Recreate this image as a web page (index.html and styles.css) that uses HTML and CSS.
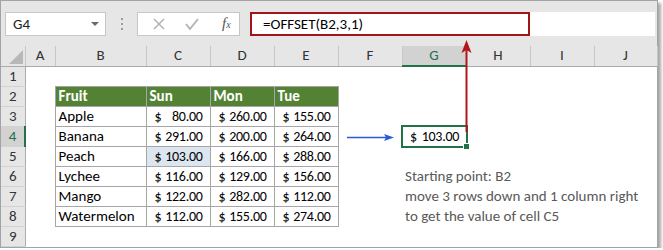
FILE: index.html
```html
<!DOCTYPE html>
<html lang="en">
<head>
    <meta charset="UTF-8">
    <title>OFFSET example</title>
    <link rel="stylesheet" href="styles.css">
</head>
<body>

    <div class="window">
        <!-- formula bar -->
        <div class="fbar">
            <div class="namebox">
                <span>G4</span>
                <span class="caret"></span>
            </div>
            <div class="grip"><i></i><i></i><i></i></div>
            <div class="fbtns">
                <svg width="103" height="22" viewBox="0 0 103 22">
                    <path d="M16 6 L26 16 M26 6 L16 16" stroke="#b5b5b5" stroke-width="1.6" fill="none"/>
                    <path d="M48 11 L52 16 L60 6" stroke="#b5b5b5" stroke-width="2" fill="none"/>
                </svg>
                <span class="fx">f<sub>x</sub></span>
            </div>
            <div class="finput">
                <div class="fhighlight">=OFFSET(B2,3,1)</div>
            </div>
        </div>

        <!-- sheet -->
        <table class="sheet">
            <colgroup>
                <col style="width:24px"><col style="width:30px"><col style="width:91px">
                <col style="width:64px"><col style="width:64px"><col style="width:64px">
                <col style="width:64px"><col style="width:64px"><col style="width:64px">
                <col style="width:64px"><col style="width:63px">
            </colgroup>
            <tr class="colhead">
                <th class="corner"><span class="tri"></span></th>
                <th>A</th><th>B</th><th>C</th><th>D</th><th>E</th><th>F</th>
                <th class="active">G</th><th>H</th><th>I</th><th>J</th>
            </tr>
            <tr><th class="rh">1</th><td></td><td></td><td></td><td></td><td></td><td></td><td></td><td></td><td></td><td></td></tr>
            <tr>
                <th class="rh">2</th><td></td>
                <td class="t hd">Fruit</td><td class="t hd">Sun</td><td class="t hd">Mon</td><td class="t hd">Tue</td>
                <td></td><td></td><td></td><td></td><td></td>
            </tr>
            <tr>
                <th class="rh">3</th><td></td>
                <td class="t">Apple</td>
                <td class="t"><div class="acc"><span>$</span><span>80.00</span></div></td>
                <td class="t"><div class="acc"><span>$</span><span>260.00</span></div></td>
                <td class="t"><div class="acc"><span>$</span><span>155.00</span></div></td>
                <td></td><td></td><td></td><td></td><td></td>
            </tr>
            <tr>
                <th class="rh active">4</th><td></td>
                <td class="t">Banana</td>
                <td class="t"><div class="acc"><span>$</span><span>291.00</span></div></td>
                <td class="t"><div class="acc"><span>$</span><span>200.00</span></div></td>
                <td class="t"><div class="acc"><span>$</span><span>264.00</span></div></td>
                <td></td>
                <td class="sel"><div class="acc"><span>$</span><span>103.00</span></div></td>
                <td></td><td></td><td></td>
            </tr>
            <tr>
                <th class="rh">5</th><td></td>
                <td class="t">Peach</td>
                <td class="t ref"><div class="acc"><span>$</span><span>103.00</span></div></td>
                <td class="t"><div class="acc"><span>$</span><span>166.00</span></div></td>
                <td class="t"><div class="acc"><span>$</span><span>288.00</span></div></td>
                <td></td><td></td><td></td><td></td><td></td>
            </tr>
            <tr>
                <th class="rh">6</th><td></td>
                <td class="t">Lychee</td>
                <td class="t"><div class="acc"><span>$</span><span>116.00</span></div></td>
                <td class="t"><div class="acc"><span>$</span><span>129.00</span></div></td>
                <td class="t"><div class="acc"><span>$</span><span>156.00</span></div></td>
                <td></td>
                <td class="note">Starting point: B2</td>
                <td></td><td></td><td></td>
            </tr>
            <tr>
                <th class="rh">7</th><td></td>
                <td class="t">Mango</td>
                <td class="t"><div class="acc"><span>$</span><span>122.00</span></div></td>
                <td class="t"><div class="acc"><span>$</span><span>282.00</span></div></td>
                <td class="t"><div class="acc"><span>$</span><span>112.00</span></div></td>
                <td></td>
                <td class="note">move 3 rows down and 1 column right</td>
                <td></td><td></td><td></td>
            </tr>
            <tr>
                <th class="rh">8</th><td></td>
                <td class="t">Watermelon</td>
                <td class="t"><div class="acc"><span>$</span><span>112.00</span></div></td>
                <td class="t"><div class="acc"><span>$</span><span>155.00</span></div></td>
                <td class="t"><div class="acc"><span>$</span><span>274.00</span></div></td>
                <td></td>
                <td class="note">to get the value of cell C5</td>
                <td></td><td></td><td></td>
            </tr>
            <tr><th class="rh">9</th><td></td><td></td><td></td><td></td><td></td><td></td><td></td><td></td><td></td><td></td></tr>
        </table>

        <!-- arrows drawn over the sheet -->
        <svg class="arrows" width="663" height="250" viewBox="0 0 663 250">
            <line x1="466.5" y1="50" x2="466.5" y2="132" stroke="#b0171c" stroke-width="2"/>
            <polygon points="466.5,40 461.5,53 466.5,50 471.5,53" fill="#b0171c"/>
            <line x1="347" y1="137.5" x2="388" y2="137.5" stroke="#2a5bd7" stroke-width="1.5"/>
            <polygon points="394,137.5 384,134 386,137.5 384,141" fill="#2a5bd7"/>
        </svg>
    </div>

</body>
</html>
```

FILE: styles.css
```css
body {
    margin: 0;
    background: #fff;
    font-family: "Carlito", "Lato", "Liberation Sans", sans-serif;
    font-size: 15px;
    color: #000;
}
.window {
    position: relative;
    width: 656px;
    border: 1px solid #a3a3a3;
    background: #fff;
    box-shadow: 3px 3px 3px rgba(0, 0, 0, 0.35);
}
.fbar {
    display: flex;
    align-items: stretch;
    height: 24px;
    padding: 11px 0 10px 4px;
    background: #e6e6e6;
}
.namebox {
    width: 101px;
    box-sizing: border-box;
    border: 1px solid #c6c6c6;
    background: #fff;
    display: flex;
    align-items: center;
    justify-content: space-between;
    padding: 0 6px 0 7px;
    color: #222;
}
.caret {
    width: 0;
    height: 0;
    border-left: 4px solid transparent;
    border-right: 4px solid transparent;
    border-top: 4px solid #6a6a6a;
}
.grip {
    width: 31px;
    display: flex;
    flex-direction: column;
    align-items: center;
    justify-content: center;
    gap: 3px;
}
.grip i {
    width: 2px;
    height: 2px;
    background: #9c9c9c;
}
.fbtns {
    width: 103px;
    box-sizing: border-box;
    border: 1px solid #c6c6c6;
    background: #fff;
    position: relative;
    display: flex;
    align-items: center;
}
.fbtns svg {
    position: absolute;
    left: 0;
    top: 0;
}
.fx {
    position: absolute;
    left: 84px;
    top: 2px;
    font-family: "Liberation Serif", serif;
    font-style: italic;
    font-size: 15px;
    color: #555;
}
.fx sub {
    font-size: 10px;
    vertical-align: 0;
}
.finput {
    margin-left: 10px;
    width: 405px;
    background: #fff;
}
.fhighlight {
    width: 280px;
    height: 24px;
    box-sizing: border-box;
    border: 2px solid #a0141a;
    padding-left: 11px;
    line-height: 20px;
}
.sheet {
    border-collapse: collapse;
    table-layout: fixed;
    width: 656px;
}
.sheet tr {
    height: 20px;
}
.sheet td, .sheet th {
    padding: 0 3px;
    height: 19px;
    line-height: 19px;
    white-space: nowrap;
}
.colhead th {
    background: #e6e6e6;
    font-weight: normal;
    color: #333;
    border-right: 1px solid #c7c7c7;
    border-bottom: 1px solid #ababab;
    text-align: center;
}
.colhead th.active {
    background: #d2d2d2;
    color: #217346;
    border-bottom: 2px solid #217346;
}
.corner {
    position: relative;
}
.tri {
    position: absolute;
    right: 2px;
    bottom: 2px;
    width: 0;
    height: 0;
    border-left: 14px solid transparent;
    border-bottom: 14px solid #b8b8b8;
}
.rh {
    background: #e6e6e6;
    font-weight: normal;
    color: #333;
    text-align: center;
    border-right: 1px solid #ababab;
    border-bottom: 1px solid #d2d2d2;
    padding: 0 !important;
}
.rh.active {
    background: #d2d2d2;
    color: #217346;
    border-right: 2px solid #217346;
}
.t {
    border: 1px solid #a6a6a6;
}
.hd {
    background: #548235;
    color: #fff;
    font-weight: bold;
}
.ref {
    background: #dce6f1;
}
.sheet td .acc {
    display: flex;
    justify-content: space-between;
    padding: 0 4px 0 5px;
    font-size: 14px;
    letter-spacing: -0.3px;
}
.sel {
    position: relative;
}
.sel::after {
    content: "";
    position: absolute;
    left: -1px;
    top: -1px;
    right: -2px;
    bottom: -2px;
    border: 2px solid #217346;
}
.sel::before {
    content: "";
    position: absolute;
    right: -4px;
    bottom: -4px;
    width: 5px;
    height: 5px;
    background: #217346;
    border: 1px solid #fff;
    z-index: 1;
}
.note {
    color: #595959;
    overflow: visible;
}
.arrows {
    position: absolute;
    left: -1px;
    top: -1px;
    pointer-events: none;
}
```
